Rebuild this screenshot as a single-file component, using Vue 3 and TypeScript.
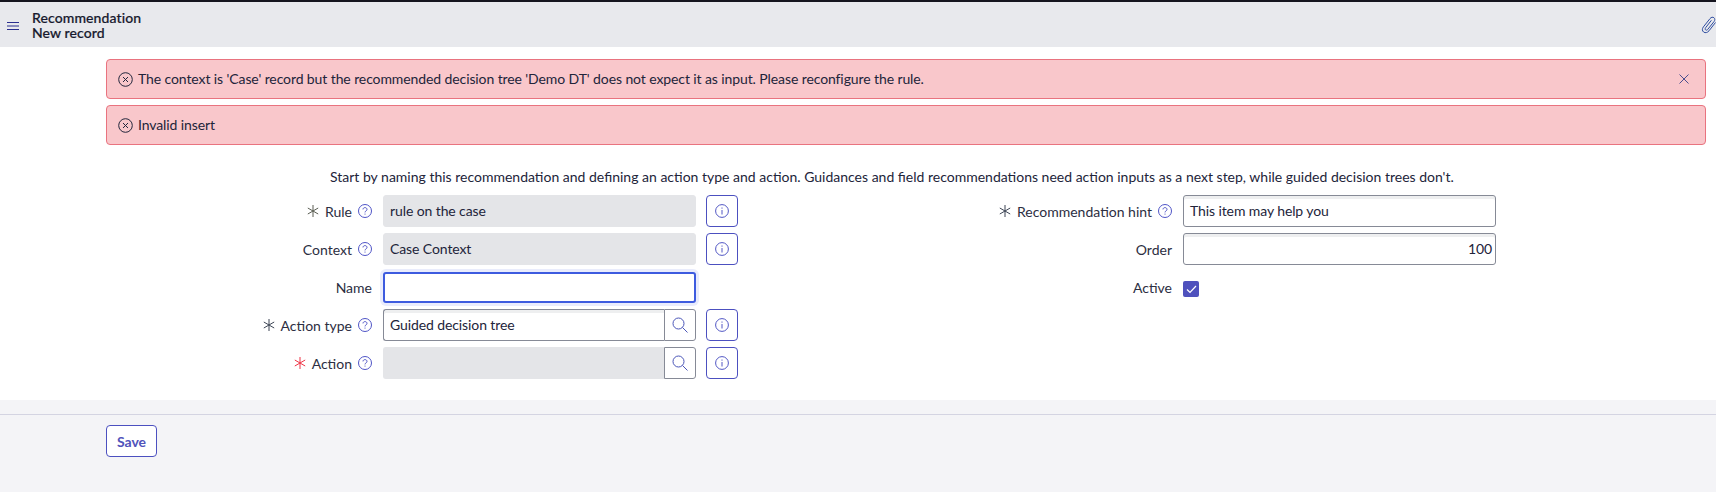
<script setup lang="ts">
interface Alert {
  text: string;
  closable: boolean;
}

const alerts: Alert[] = [
  {
    text: "The context is 'Case' record but the recommended decision tree 'Demo DT' does not expect it as input. Please reconfigure the rule.",
    closable: true
  },
  { text: 'Invalid insert', closable: false }
];
</script>

<template>
  <div class="page">
    <header class="head">
      <svg class="menu" width="12" height="8" viewBox="0 0 12 8">
        <path d="M0 .5h12M0 4h12M0 7.500h12" stroke="#2b2f8f" fill="none" />
      </svg>
      <div class="title">
        <div>Recommendation</div>
        <div>New record</div>
      </div>
      <svg class="clip" width="16" height="18" viewBox="0 0 16 18">
        <path d="M14.500 6.500 8 14.800c-1.500 1.900-3.700 2.400-5.300 1.300-1.600-1.100-1.800-3.300-.3-5.200L9 2.600c1.100-1.400 2.800-1.800 3.900-.9 1.100.9 1.200 2.500.1 3.900L6.800 13.300c-.7.900-1.600 1.100-2.200.6-.6-.5-.6-1.400.1-2.300l5.700-7.300" stroke="#2f4da0" stroke-width="1" fill="none" />
      </svg>
    </header>

    <main class="body">
      <div v-for="a in alerts" :key="a.text" class="alert">
        <svg class="err" width="15" height="15" viewBox="0 0 15 15">
          <circle cx="7.500" cy="7.500" r="6.800" stroke="#23263c" fill="none" />
          <path d="M5 5l5 5M10 5l-5 5" stroke="#23263c" fill="none" />
        </svg>
        <span class="alert-text">{{ a.text }}</span>
        <svg v-if="a.closable" class="close" width="10" height="10" viewBox="0 0 10 10">
          <path d="M.5.500l9 9M9.500.500l-9 9" stroke="#4b4f8f" fill="none" />
        </svg>
      </div>

      <p class="intro">Start by naming this recommendation and defining an action type and action. Guidances and field recommendations need action inputs as a next step, while guided decision trees don't.</p>

      <div class="form">
        <div class="col left">
          <div class="row">
            <div class="label">
              <svg class="req" width="12" height="12" viewBox="0 0 12 12"><path d="M6 0v12M.8 3l10.400 6M11.200 3L.8 9" stroke="#5a5d52" fill="none" /></svg>
              <span>Rule</span>
              <svg class="help" width="14" height="14" viewBox="0 0 14 14"><circle cx="7" cy="7" r="6.500" /><path d="M5 5.400C5 4.200 6 3.600 7 3.600s2 .7 2 1.800c0 1.500-2 1.500-2 3M7 9.600v1" /></svg>
            </div>
            <div class="field readonly">rule on the case</div>
            <button class="info"><svg width="14" height="14" viewBox="0 0 14 14"><circle cx="7" cy="7" r="6.400" /><path d="M7 6v4.500M7 3.500v1.200" /></svg></button>
          </div>
          <div class="row">
            <div class="label">
              <span>Context</span>
              <svg class="help" width="14" height="14" viewBox="0 0 14 14"><circle cx="7" cy="7" r="6.500" /><path d="M5 5.400C5 4.200 6 3.600 7 3.600s2 .7 2 1.800c0 1.500-2 1.500-2 3M7 9.600v1" /></svg>
            </div>
            <div class="field readonly">Case Context</div>
            <button class="info"><svg width="14" height="14" viewBox="0 0 14 14"><circle cx="7" cy="7" r="6.400" /><path d="M7 6v4.500M7 3.500v1.200" /></svg></button>
          </div>
          <div class="row">
            <div class="label"><span>Name</span></div>
            <div class="field focused"></div>
          </div>
          <div class="row">
            <div class="label">
              <svg class="req" width="12" height="12" viewBox="0 0 12 12"><path d="M6 0v12M.8 3l10.400 6M11.200 3L.8 9" stroke="#3c4454" fill="none" /></svg>
              <span>Action type</span>
              <svg class="help" width="14" height="14" viewBox="0 0 14 14"><circle cx="7" cy="7" r="6.500" /><path d="M5 5.400C5 4.200 6 3.600 7 3.600s2 .7 2 1.800c0 1.500-2 1.500-2 3M7 9.600v1" /></svg>
            </div>
            <div class="lookup">
              <div class="field inner">Guided decision tree</div>
              <span class="search"><svg width="16" height="16" viewBox="0 0 16 16"><circle cx="6.500" cy="6.500" r="5.500" /><path d="M10.500 10.500l5 5" /></svg></span>
            </div>
            <button class="info"><svg width="14" height="14" viewBox="0 0 14 14"><circle cx="7" cy="7" r="6.400" /><path d="M7 6v4.500M7 3.500v1.200" /></svg></button>
          </div>
          <div class="row">
            <div class="label">
              <svg class="req" width="12" height="12" viewBox="0 0 12 12"><path d="M6 0v12M.8 3l10.400 6M11.200 3L.8 9" stroke="#ee3344" fill="none" /></svg>
              <span>Action</span>
              <svg class="help" width="14" height="14" viewBox="0 0 14 14"><circle cx="7" cy="7" r="6.500" /><path d="M5 5.400C5 4.200 6 3.600 7 3.600s2 .7 2 1.800c0 1.500-2 1.500-2 3M7 9.600v1" /></svg>
            </div>
            <div class="lookup">
              <div class="field inner disabled"></div>
              <span class="search"><svg width="16" height="16" viewBox="0 0 16 16"><circle cx="6.500" cy="6.500" r="5.500" /><path d="M10.500 10.500l5 5" /></svg></span>
            </div>
            <button class="info"><svg width="14" height="14" viewBox="0 0 14 14"><circle cx="7" cy="7" r="6.400" /><path d="M7 6v4.500M7 3.500v1.200" /></svg></button>
          </div>
        </div>

        <div class="col right">
          <div class="row">
            <div class="label">
              <svg class="req" width="12" height="12" viewBox="0 0 12 12"><path d="M6 0v12M.8 3l10.400 6M11.200 3L.8 9" stroke="#3c4454" fill="none" /></svg>
              <span>Recommendation hint</span>
              <svg class="help" width="14" height="14" viewBox="0 0 14 14"><circle cx="7" cy="7" r="6.500" /><path d="M5 5.400C5 4.200 6 3.600 7 3.600s2 .7 2 1.800c0 1.500-2 1.500-2 3M7 9.600v1" /></svg>
            </div>
            <div class="field">This item may help you</div>
          </div>
          <div class="row">
            <div class="label"><span>Order</span></div>
            <div class="field number">100</div>
          </div>
          <div class="row">
            <div class="label"><span>Active</span></div>
            <span class="check"><svg width="11" height="9" viewBox="0 0 11 9"><path d="M1 4.500l3 3 6-6.500" /></svg></span>
          </div>
        </div>
      </div>
    </main>

    <footer class="foot">
      <button class="save">Save</button>
    </footer>
  </div>
</template>

<style scoped>
.page {
  height: 492px;
  display: flex;
  flex-direction: column;
  font-family: Lato, "Liberation Sans", sans-serif;
  font-size: 14px;
  color: #22243a;
  background: #f4f4f7;
  overflow: hidden;
}

.head {
  height: 47px;
  box-sizing: border-box;
  border-top: 2px solid #15151f;
  background: #e8e9ed;
  display: flex;
  align-items: center;
  padding-left: 7px;
}
.menu {
  margin-right: 13px;
  margin-top: 2px;
}
.title {
  font-weight: 500;
  line-height: 15px;
  letter-spacing: 0.1px;
  color: #17192e;
  -webkit-text-stroke: 0.2px #17192e;
}
.clip {
  margin-left: auto;
  margin-right: -1px;
  margin-top: 1px;
}

.body {
  height: 353px;
  box-sizing: border-box;
  background: #fff;
  padding: 12px 10px 0 106px;
}

.alert {
  height: 40px;
  box-sizing: border-box;
  margin-bottom: 6px;
  display: flex;
  align-items: center;
  padding-left: 11px;
  padding-right: 16px;
  background: #f9c7cb;
  border: 1px solid #e9737f;
  border-radius: 4px;
}
.err {
  margin-right: 5px;
}
.alert-text {
  letter-spacing: -0.1px;
  margin-top: -2px;
}
.close {
  margin-left: auto;
}

.intro {
  margin: 23px 0 0;
  padding-left: 224px;
  line-height: 17px;
  color: #22243a;
}

.form {
  display: flex;
  margin-top: 10px;
}
.col {
  display: flex;
  flex-direction: column;
  gap: 6px;
}
.left {
  width: 800px;
}
.row {
  display: grid;
  grid-template-columns: 266px 324px 42px;
  align-items: center;
  height: 32px;
}
.row > .field,
.lookup {
  margin-left: 11px;
  width: 313px;
}
.info {
  margin-left: 10px;
}

.label {
  display: flex;
  justify-content: flex-end;
  align-items: center;
  gap: 6px;
  color: #2c2e42;
}
.req {
  margin-right: 0;
}
.help {
  fill: none;
  stroke: #4f54c6;
  stroke-width: 1;
}

.field {
  height: 32px;
  box-sizing: border-box;
  padding: 0 6px;
  line-height: 30px;
  letter-spacing: -0.1px;
  border: 1px solid #868a96;
  border-radius: 3px;
  background: #fff;
  box-shadow: inset 0 3px 0 #eeeff0;
}
.readonly {
  background: #e4e5e8;
  border-color: #e4e5e8;
  box-shadow: none;
}
.row > .focused {
  height: 31px;
  border: 2px solid #3d5bdf;
  box-shadow: 0 0 0 3px #e9ecfc;
}
.number {
  text-align: right;
  padding-right: 3px;
}

.lookup {
  display: flex;
  height: 32px;
}
.inner {
  flex: 1;
  border-radius: 3px 0 0 3px;
  border-right: 0;
}
.disabled {
  background: #e4e5e8;
  border-color: #e4e5e8;
  box-shadow: none;
}
.search {
  width: 32px;
  box-sizing: border-box;
  display: flex;
  align-items: center;
  justify-content: center;
  border: 1px solid #868a96;
  border-radius: 0 3px 3px 0;
  background: #fff;
}
.search svg {
  fill: none;
  stroke: #4a55b8;
}

.info {
  width: 32px;
  height: 32px;
  box-sizing: border-box;
  padding: 0;
  display: flex;
  align-items: center;
  justify-content: center;
  background: #fff;
  border: 1px solid #4c50c0;
  border-radius: 4px;
}
.info svg {
  fill: none;
  stroke: #5257c4;
}

.check {
  width: 16px;
  height: 16px;
  margin-left: 11px;
  margin-top: 4px;
  display: flex;
  align-items: center;
  justify-content: center;
  background: #4f51bd;
  border-radius: 2px;
}
.check svg {
  fill: none;
  stroke: #fff;
  stroke-width: 1.200;
}

.foot {
  flex: 1;
  margin-top: 14px;
  border-top: 1px solid #d4d4e2;
  padding: 10px 0 0 106px;
}
.save {
  width: 51px;
  height: 32px;
  padding: 0;
  font-family: inherit;
  font-size: 14px;
  font-weight: 700;
  color: #5053bb;
  background: #fff;
  border: 1px solid #4c50c0;
  border-radius: 4px;
}
</style>
